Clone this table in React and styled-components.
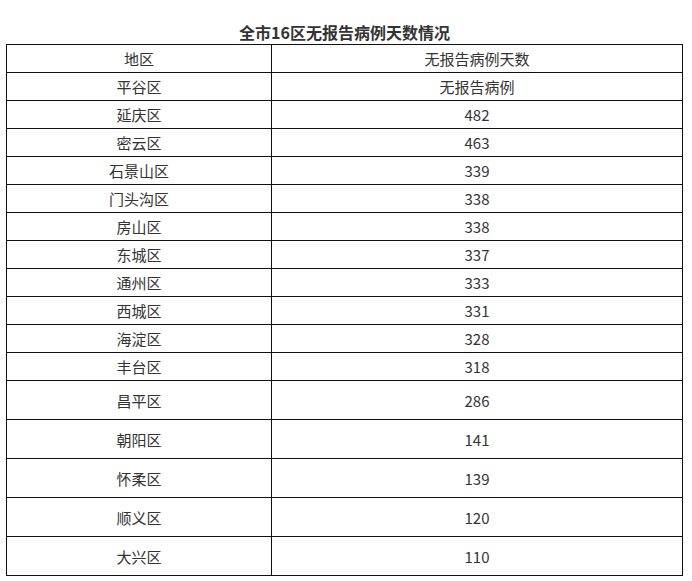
import React from 'react';
import styled, { createGlobalStyle } from 'styled-components';

const GlobalStyle = createGlobalStyle`
  body {
    margin: 0;
    background: #fff;
    font-family: "Noto Sans CJK SC", "Noto Sans", sans-serif;
    color: #333;
  }
`;

const Page = styled.div`
  padding: 20px 9px 0 6px;
`;

const Title = styled.h3`
  margin: 0;
  height: 24px;
  line-height: 24px;
  text-align: center;
  font-size: 16px;
  font-weight: bold;
  color: #333;
`;

const Grid = styled.div`
  display: grid;
  grid-template-columns: 265px 411px;
  border-top: 1px solid #111;
  border-left: 1px solid #111;
  width: 677px;
  box-sizing: border-box;
`;

const Cell = styled.div`
  box-sizing: border-box;
  height: ${(p) => (p.$tall ? 39 : 28)}px;
  border-right: 1px solid #111;
  border-bottom: 1px solid #111;
  display: flex;
  align-items: center;
  justify-content: center;
  font-size: 15px;
  color: #333;
`;

const rows = [
  ['地区', '无报告病例天数'],
  ['平谷区', '无报告病例'],
  ['延庆区', '482'],
  ['密云区', '463'],
  ['石景山区', '339'],
  ['门头沟区', '338'],
  ['房山区', '338'],
  ['东城区', '337'],
  ['通州区', '333'],
  ['西城区', '331'],
  ['海淀区', '328'],
  ['丰台区', '318'],
  ['昌平区', '286', true],
  ['朝阳区', '141', true],
  ['怀柔区', '139', true],
  ['顺义区', '120', true],
  ['大兴区', '110', true],
];

export default function App() {
  return (
    <>
      <GlobalStyle />
      <Page>
        <Title>全市16区无报告病例天数情况</Title>
        <Grid>
          {rows.map(([name, days, tall]) => (
            <React.Fragment key={name}>
              <Cell $tall={tall}>{name}</Cell>
              <Cell $tall={tall}>{days}</Cell>
            </React.Fragment>
          ))}
        </Grid>
      </Page>
    </>
  );
}
